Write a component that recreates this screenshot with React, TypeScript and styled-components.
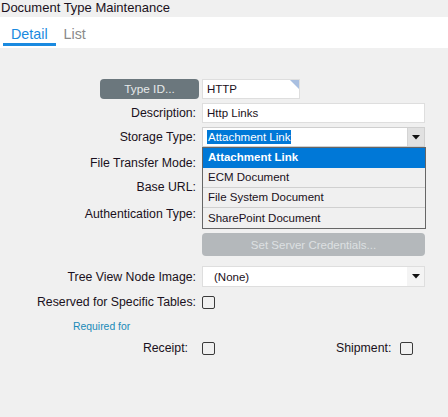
import React from "react";
import styled, { createGlobalStyle, css } from "styled-components";

const Global = createGlobalStyle`
  html, body { margin: 0; padding: 0; background: #f0f0f0; }
  body { font-family: "Liberation Sans", Arial, sans-serif; color: #1a1020; }
  * { box-sizing: border-box; }
`;

const Page = styled.div`
  width: 448px;
  height: 417px;
  background: #f0f0f0;
  overflow: hidden;
`;

const TitleBar = styled.div`
  height: 17px;
  padding-left: 1px;
  font-size: 13px;
  line-height: 16px;
  color: #1a1020;
`;

const TabStrip = styled.div`
  height: 31px;
  background: #ffffff;
  display: flex;
  align-items: flex-start;
  padding: 9px 0 0 3px;
`;

const Tab = styled.div<{ $active?: boolean }>`
  padding: 0 8px 1px;
  font-size: 14.3px;
  line-height: 16px;
  color: ${(p) => (p.$active ? "#1a8ae0" : "#8a8a8a")};
  border-bottom: 3px solid ${(p) => (p.$active ? "#1a8ae0" : "transparent")};
`;

const Form = styled.div`
  display: flex;
  flex-direction: column;
`;

const Row = styled.div<{ $h: number; $mt: number }>`
  display: grid;
  grid-template-columns: 199px 223px;
  column-gap: 3px;
  align-items: center;
  height: ${(p) => p.$h}px;
  margin-top: ${(p) => p.$mt}px;
`;

const Label = styled.div`
  text-align: right;
  padding-right: 3px;
  font-size: 12.3px;
  white-space: nowrap;
  color: #1a1020;
`;

const FieldCell = styled.div`
  position: relative;
  height: 100%;
  display: flex;
  align-items: center;
`;

const TypeIdButton = styled.button`
  justify-self: end;
  width: 99px;
  height: 20px;
  border: none;
  border-radius: 4px;
  background: #6b777d;
  color: #e6e9ea;
  font-family: "Liberation Sans", Arial, sans-serif;
  font-size: 11.8px;
  padding: 0;
`;

const inputBase = css`
  height: 100%;
  background: #ffffff;
  border: 1px solid #dedede;
  font-family: "Liberation Sans", Arial, sans-serif;
  font-size: 11.5px;
  color: #1a1020;
  display: flex;
  align-items: center;
`;

const TextBox = styled.div<{ $w?: number }>`
  ${inputBase};
  position: relative;
  width: ${(p) => (p.$w ? `${p.$w}px` : "100%")};
  padding-left: 4px;
`;

const CornerMark = styled.span`
  position: absolute;
  top: 0;
  right: 0;
  width: 0;
  height: 0;
  border-top: 9px solid #a9bfe0;
  border-left: 9px solid transparent;
`;

const Select = styled.div<{ $open?: boolean }>`
  ${inputBase};
  width: 100%;
  padding-left: ${(p) => (p.$open ? "4px" : "11px")};
  justify-content: space-between;
  border-color: ${(p) => (p.$open ? "#cfcfcf" : "#dedede")};
`;

const Highlight = styled.span`
  background: #0078d7;
  color: #ffffff;
  padding: 0 1px;
  line-height: 14px;
`;

const ArrowButton = styled.div<{ $pressed?: boolean }>`
  width: 17px;
  height: 100%;
  display: flex;
  align-items: center;
  justify-content: center;
  background: ${(p) => (p.$pressed ? "#e1e1e1" : "#f4f4f4")};
  border-left: 1px solid ${(p) => (p.$pressed ? "#d4d4d4" : "#f4f4f4")};
`;

const Arrow = () => (
  <svg width="8" height="5" viewBox="0 0 8 5">
    <path d="M0 0 H8 L4 4.5 Z" fill="#111" />
  </svg>
);

const DropList = styled.div`
  position: absolute;
  top: 100%;
  left: 0;
  width: calc(100% + 1px);
  border: 1px solid #666666;
  background: #f0f0f0;
  z-index: 5;
`;

const DropItem = styled.div<{ $selected?: boolean }>`
  height: 20px;
  padding-left: 5px;
  padding-bottom: 1px;
  display: flex;
  align-items: center;
  font-size: 11.5px;
  border-bottom: 1px solid ${(p) => (p.$selected ? "#0078d7" : "#d0d0d0")};
  background: ${(p) => (p.$selected ? "#0078d7" : "#f0f0f0")};
  color: ${(p) => (p.$selected ? "#ffffff" : "#1a1020")};
  font-weight: ${(p) => (p.$selected ? 700 : 400)};
  &:last-child { border-bottom: none; }
`;

const WideButton = styled.button`
  width: 100%;
  height: 100%;
  border: none;
  border-radius: 4px;
  background: #b4b8bb;
  color: #dde0e2;
  font-family: "Liberation Sans", Arial, sans-serif;
  font-size: 11.5px;
  padding: 0;
`;

const Checkbox = styled.span`
  display: inline-block;
  width: 13px;
  height: 13px;
  border: 1px solid #3a3a3a;
  border-radius: 2px;
  background: transparent;
`;

const NoteRow = styled.div<{ $mt: number }>`
  margin-top: ${(p) => p.$mt}px;
  padding-left: 73px;
  height: 14px;
  font-size: 10.4px;
  line-height: 14px;
  color: #1a8ab8;
`;

const PairRow = styled.div<{ $mt: number }>`
  margin-top: ${(p) => p.$mt}px;
  height: 14px;
  display: grid;
  grid-template-columns: 188px 14px 134px 55px 9px 13px;
  align-items: center;
`;

const PairLabel = styled.span`
  text-align: right;
  font-size: 12.3px;
  color: #1a1020;
  white-space: nowrap;
`;

const Spacer = styled.span``;

export default function App() {
  return (
    <Page>
      <Global />
      <TitleBar>Document Type Maintenance</TitleBar>
      <TabStrip>
        <Tab $active>Detail</Tab>
        <Tab>List</Tab>
      </TabStrip>
      <Form>
        <Row $h={20} $mt={31}>
          <TypeIdButton>Type ID...</TypeIdButton>
          <FieldCell>
            <TextBox $w={98}>
              HTTP
              <CornerMark />
            </TextBox>
          </FieldCell>
        </Row>
        <Row $h={20} $mt={4}>
          <Label>Description:</Label>
          <FieldCell>
            <TextBox>Http Links</TextBox>
          </FieldCell>
        </Row>
        <Row $h={20} $mt={4}>
          <Label>Storage Type:</Label>
          <FieldCell>
            <Select $open>
              <Highlight>Attachment Link</Highlight>
              <ArrowButton $pressed>
                <Arrow />
              </ArrowButton>
            </Select>
            <DropList>
              <DropItem $selected>Attachment Link</DropItem>
              <DropItem>ECM Document</DropItem>
              <DropItem>File System Document</DropItem>
              <DropItem>SharePoint Document</DropItem>
            </DropList>
          </FieldCell>
        </Row>
        <Row $h={22} $mt={5}>
          <Label>File Transfer Mode:</Label>
          <FieldCell />
        </Row>
        <Row $h={20} $mt={3}>
          <Label>Base URL:</Label>
          <FieldCell />
        </Row>
        <Row $h={26} $mt={4}>
          <Label>Authentication Type:</Label>
          <FieldCell />
        </Row>
        <Row $h={23} $mt={6}>
          <Spacer />
          <FieldCell>
            <WideButton>Set Server Credentials...</WideButton>
          </FieldCell>
        </Row>
        <Row $h={21} $mt={10}>
          <Label>Tree View Node Image:</Label>
          <FieldCell>
            <Select>
              (None)
              <ArrowButton>
                <Arrow />
              </ArrowButton>
            </Select>
          </FieldCell>
        </Row>
        <Row $h={14} $mt={8}>
          <Label>Reserved for Specific Tables:</Label>
          <FieldCell>
            <Checkbox />
          </FieldCell>
        </Row>
        <NoteRow $mt={11}>Required for</NoteRow>
        <PairRow $mt={7}>
          <PairLabel>Receipt:</PairLabel>
          <Spacer />
          <Checkbox />
          <PairLabel>Shipment:</PairLabel>
          <Spacer />
          <Checkbox />
        </PairRow>
      </Form>
    </Page>
  );
}
